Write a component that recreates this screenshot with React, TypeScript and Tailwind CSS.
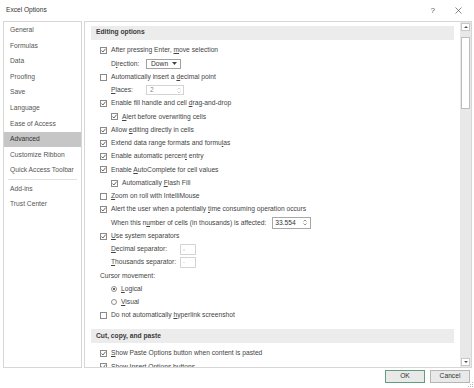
import React from "react";

const Check = ({ checked }: { checked?: boolean }) => (
  <span className="flex h-[7px] w-[7px] shrink-0 items-center justify-center border border-[#8a8a8a] bg-white">
    {checked && (
      <svg width="5" height="5" viewBox="0 0 5 5">
        <path d="M0.4 2.5 L1.9 4 L4.6 0.7" fill="none" stroke="#3c3c3c" strokeWidth="0.8" />
      </svg>
    )}
  </span>
);

const Radio = ({ checked }: { checked?: boolean }) => (
  <span className="flex h-[6px] w-[6px] shrink-0 items-center justify-center rounded-full border border-[#8f8f8f] bg-white">
    {checked && <span className="h-[2px] w-[2px] rounded-full bg-[#333]" />}
  </span>
);

const Spin = ({ light }: { light?: boolean }) => (
  <svg width="4" height="7" viewBox="0 0 4 7" className="shrink-0">
    <path d="M0.5 2.5 L2 1 L3.5 2.5 M0.5 4.5 L2 6 L3.5 4.5" fill="none" stroke={light ? "#c4c4c4" : "#666"} strokeWidth="0.7" />
  </svg>
);

type RowProps = {
  indent?: boolean;
  box?: "on" | "off" | "radio-on" | "radio-off";
  labelW?: string;
  field?: React.ReactNode;
  children: React.ReactNode;
};

const Row = ({ indent, box, labelW, field, children }: RowProps) => (
  <div className={`flex h-[13.25px] items-center whitespace-nowrap ${indent ? "pl-[11px]" : ""}`}>
    {box === "on" && <Check checked />}
    {box === "off" && <Check />}
    {box === "radio-on" && <Radio checked />}
    {box === "radio-off" && <Radio />}
    <span className={`${box ? "pl-[4px]" : ""} ${labelW ?? ""}`}>{children}</span>
    {field}
  </div>
);

const Header = ({ children }: { children: React.ReactNode }) => (
  <div className="flex h-[13.5px] items-center bg-[#ececec] pl-[5px] font-bold text-[#3a3a3a]">{children}</div>
);

const nav = ["General", "Formulas", "Data", "Proofing", "Save", "Language", "Ease of Access", "Advanced", "Customize Ribbon", "Quick Access Toolbar"];

export default function App() {
  return (
    <div className="h-[388px] w-[474px] overflow-hidden bg-white font-['Liberation_Sans',Arial,sans-serif] text-[6.7px] leading-none text-[#444]">
      {/* title bar */}
      <div className="flex h-[21px] items-center pl-[6px] pr-[12px] text-[#333]">
        <span className="text-[6.6px]">Excel Options</span>
        <span className="ml-auto text-[8px] text-[#555]">?</span>
        <svg width="7" height="7" viewBox="0 0 7 7" className="ml-[20px]">
          <path d="M0.5 0.5 L6.5 6.5 M6.5 0.5 L0.5 6.5" stroke="#555" strokeWidth="0.7" />
        </svg>
      </div>

      <div className="flex h-[347px] gap-[2px] pl-[3px] pr-[2px]">
        {/* left nav */}
        <div className="flex w-[79px] shrink-0 flex-col border border-[#d6d6d6] pt-[0.5px] text-[#555]">
          {nav.map((n) => (
            <div
              key={n}
              className={`flex h-[15.6px] items-center pl-[6px] ${n === "Advanced" ? "bg-[#c6c6c6] text-[#333]" : ""}`}
            >
              {n}
            </div>
          ))}
          <div className="mx-[4px] my-[1px] h-px bg-[#e0e0e0]" />
          <div className="flex h-[15.6px] items-center pl-[6px]">Add-ins</div>
          <div className="flex h-[15.6px] items-center pl-[6px]">Trust Center</div>
        </div>

        {/* right panel */}
        <div className="flex min-w-0 flex-1 border border-[#d6d6d6]">
          <div className="min-w-0 flex-1 overflow-hidden pl-[6px] pr-[6px] pt-[4px]">
            <Header>Editing options</Header>
            <div className="pl-[9px] pt-[4.5px]">
              <Row box="on">After pressing Enter, <u>m</u>ove selection</Row>
              <Row
                indent
                labelW="w-[35px]"
                field={
                  <span className="flex h-[10px] w-[35px] items-center border border-[#a0a0a0] pl-[4px] pr-[3px] text-[#333]">
                    Down
                    <svg width="5" height="3" viewBox="0 0 5 3" className="ml-auto">
                      <path d="M0 0 H5 L2.5 3 Z" fill="#444" />
                    </svg>
                  </span>
                }
              >
                D<u>i</u>rection:
              </Row>
              <Row box="off">Automatically insert a <u>d</u>ecimal point</Row>
              <Row
                indent
                labelW="w-[35px]"
                field={
                  <span className="flex h-[10px] w-[38px] items-center border border-[#d4d4d4] pl-[3px] pr-[2px] text-[#8a8a8a]">
                    2
                    <span className="ml-auto"><Spin light /></span>
                  </span>
                }
              >
                <u>P</u>laces:
              </Row>
              <Row box="on">Enable fill handle and cell <u>d</u>rag-and-drop</Row>
              <Row indent box="on"><u>A</u>lert before overwriting cells</Row>
              <Row box="on">Allow <u>e</u>diting directly in cells</Row>
              <Row box="on">Extend data range formats and formu<u>l</u>as</Row>
              <Row box="on">Enable automatic percen<u>t</u> entry</Row>
              <Row box="on">Enable <u>A</u>utoComplete for cell values</Row>
              <Row indent box="on">Automatically <u>F</u>lash Fill</Row>
              <Row box="off"><u>Z</u>oom on roll with IntelliMouse</Row>
              <Row box="on">Alert the user when a potentially <u>t</u>ime consuming operation occurs</Row>
              <Row
                indent
                field={
                  <span className="ml-[6px] flex h-[12.5px] w-[39px] items-center border border-[#a8a8a8] pl-[2px] pr-[3px] text-[#333]">
                    33.554
                    <span className="ml-auto"><Spin /></span>
                  </span>
                }
              >
                When this n<u>u</u>mber of cells (in thousands) is affected:
              </Row>
              <Row box="on"><u>U</u>se system separators</Row>
              <Row
                indent
                labelW="w-[69px]"
                field={<span className="flex h-[11px] w-[16px] items-end border border-[#d4d4d4] pb-[2px] pl-[2px] text-[#999]">,</span>}
              >
                <u>D</u>ecimal separator:
              </Row>
              <Row
                indent
                labelW="w-[69px]"
                field={<span className="flex h-[11px] w-[16px] items-end border border-[#d4d4d4] pb-[2px] pl-[2px] text-[#999]">.</span>}
              >
                <u>T</u>housands separator:
              </Row>
              <Row>Cursor movement:</Row>
              <Row indent box="radio-on"><u>L</u>ogical</Row>
              <Row indent box="radio-off"><u>V</u>isual</Row>
              <Row box="off">Do not automatically <u>h</u>yperlink screenshot</Row>
            </div>
            <div className="mt-[7px]">
              <Header>Cut, copy, and paste</Header>
            </div>
            <div className="pl-[9px] pt-[4.25px]">
              <Row box="on"><u>S</u>how Paste Options button when content is pasted</Row>
              <Row box="on">Show Insert <u>O</u>ptions buttons</Row>
            </div>
          </div>

          {/* scrollbar */}
          <div className="flex w-[11px] shrink-0 flex-col bg-[#e8e8e8] p-[1px]">
            <div className="flex h-[8px] items-center justify-center border border-[#c8c8c8] bg-white">
              <svg width="4" height="2" viewBox="0 0 4 2"><path d="M0 2 L2 0 L4 2 Z" fill="#555" /></svg>
            </div>
            <div className="mt-[6px] h-[72px] border border-[#bdbdbd] bg-white" />
            <div className="flex-1" />
            <div className="flex h-[8px] items-center justify-center border border-[#c8c8c8] bg-white">
              <svg width="4" height="2" viewBox="0 0 4 2"><path d="M0 0 L4 0 L2 2 Z" fill="#555" /></svg>
            </div>
          </div>
        </div>
      </div>

      {/* buttons */}
      <div className="relative flex h-[20px] items-start justify-end gap-[5px] pr-[4px] pt-[2px]">
        <button className="flex h-[13px] w-[40px] items-center justify-center border border-[#5f9f80] bg-[#e9e9e9] text-[#333]">OK</button>
        <button className="flex h-[13px] w-[40px] items-center justify-center border border-[#b5b5b5] bg-[#e9e9e9] text-[#333]">Cancel</button>
        <svg width="5" height="5" viewBox="0 0 5 5" className="absolute bottom-[1px] right-[1px]">
          <rect x="4" y="0" width="1" height="1" fill="#bbb" />
          <rect x="2" y="2" width="1" height="1" fill="#bbb" />
          <rect x="4" y="2" width="1" height="1" fill="#bbb" />
          <rect x="0" y="4" width="1" height="1" fill="#bbb" />
          <rect x="2" y="4" width="1" height="1" fill="#bbb" />
          <rect x="4" y="4" width="1" height="1" fill="#bbb" />
        </svg>
      </div>
    </div>
  );
}
